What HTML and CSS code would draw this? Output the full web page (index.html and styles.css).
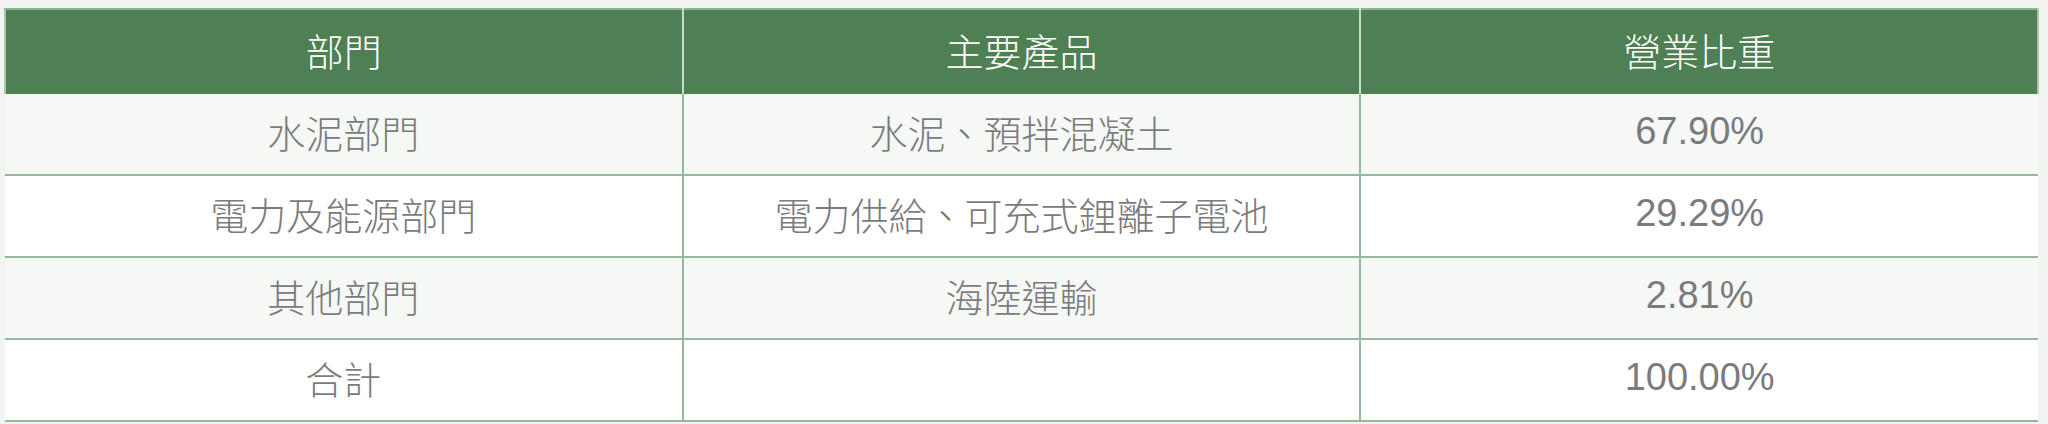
FILE: index.html
```html
<!DOCTYPE html>
<html lang="zh-Hant">
<head>
<meta charset="utf-8">
<link rel="stylesheet" href="styles.css">
</head>
<body>
<div class="wrap">
<table class="seg">
  <thead>
    <tr><th>部門</th><th>主要產品</th><th>營業比重</th></tr>
  </thead>
  <tbody>
    <tr class="alt"><td>水泥部門</td><td>水泥、預拌混凝土</td><td>67.90%</td></tr>
    <tr><td>電力及能源部門</td><td>電力供給、可充式鋰離子電池</td><td>29.29%</td></tr>
    <tr class="alt"><td>其他部門</td><td>海陸運輸</td><td>2.81%</td></tr>
    <tr><td>合計</td><td></td><td>100.00%</td></tr>
  </tbody>
</table>
</div>
</body>
</html>
```
FILE: styles.css
```css
html, body {
  margin: 0;
  padding: 0;
  background: #f2f4f2;
}
.wrap {
  padding: 8px 9px 0 4px;
}
.seg {
  width: 2035px;
  border-collapse: collapse;
  table-layout: fixed;
  font-family: "Liberation Sans", "Noto Sans CJK TC", sans-serif;
}
.seg th {
  background: #4f8054;
  color: #ffffff;
  font-weight: 300;
  font-size: 38px;
  height: 79px;
  padding: 0 0 5px;
  text-align: center;
  border-top: 2px solid #8fb597;
  border-left: 2px solid #c9dccb;
  border-right: 2px solid #c9dccb;
}
.seg th:first-child { border-left: 2px solid #a9c6ad; }
.seg th:last-child { border-right: 2px solid #a9c6ad; }
.seg td {
  background: #ffffff;
  color: #7a7b7d;
  font-weight: 300;
  font-size: 38px;
  height: 75px;
  padding: 0 0 5px;
  text-align: center;
  border: 2px solid #93b99a;
  border-top: none;
}
.seg tr.alt td { background: #f6f8f6; }
.seg td:first-child { border-left: none; }
.seg td:last-child { border-right: none; }
```
